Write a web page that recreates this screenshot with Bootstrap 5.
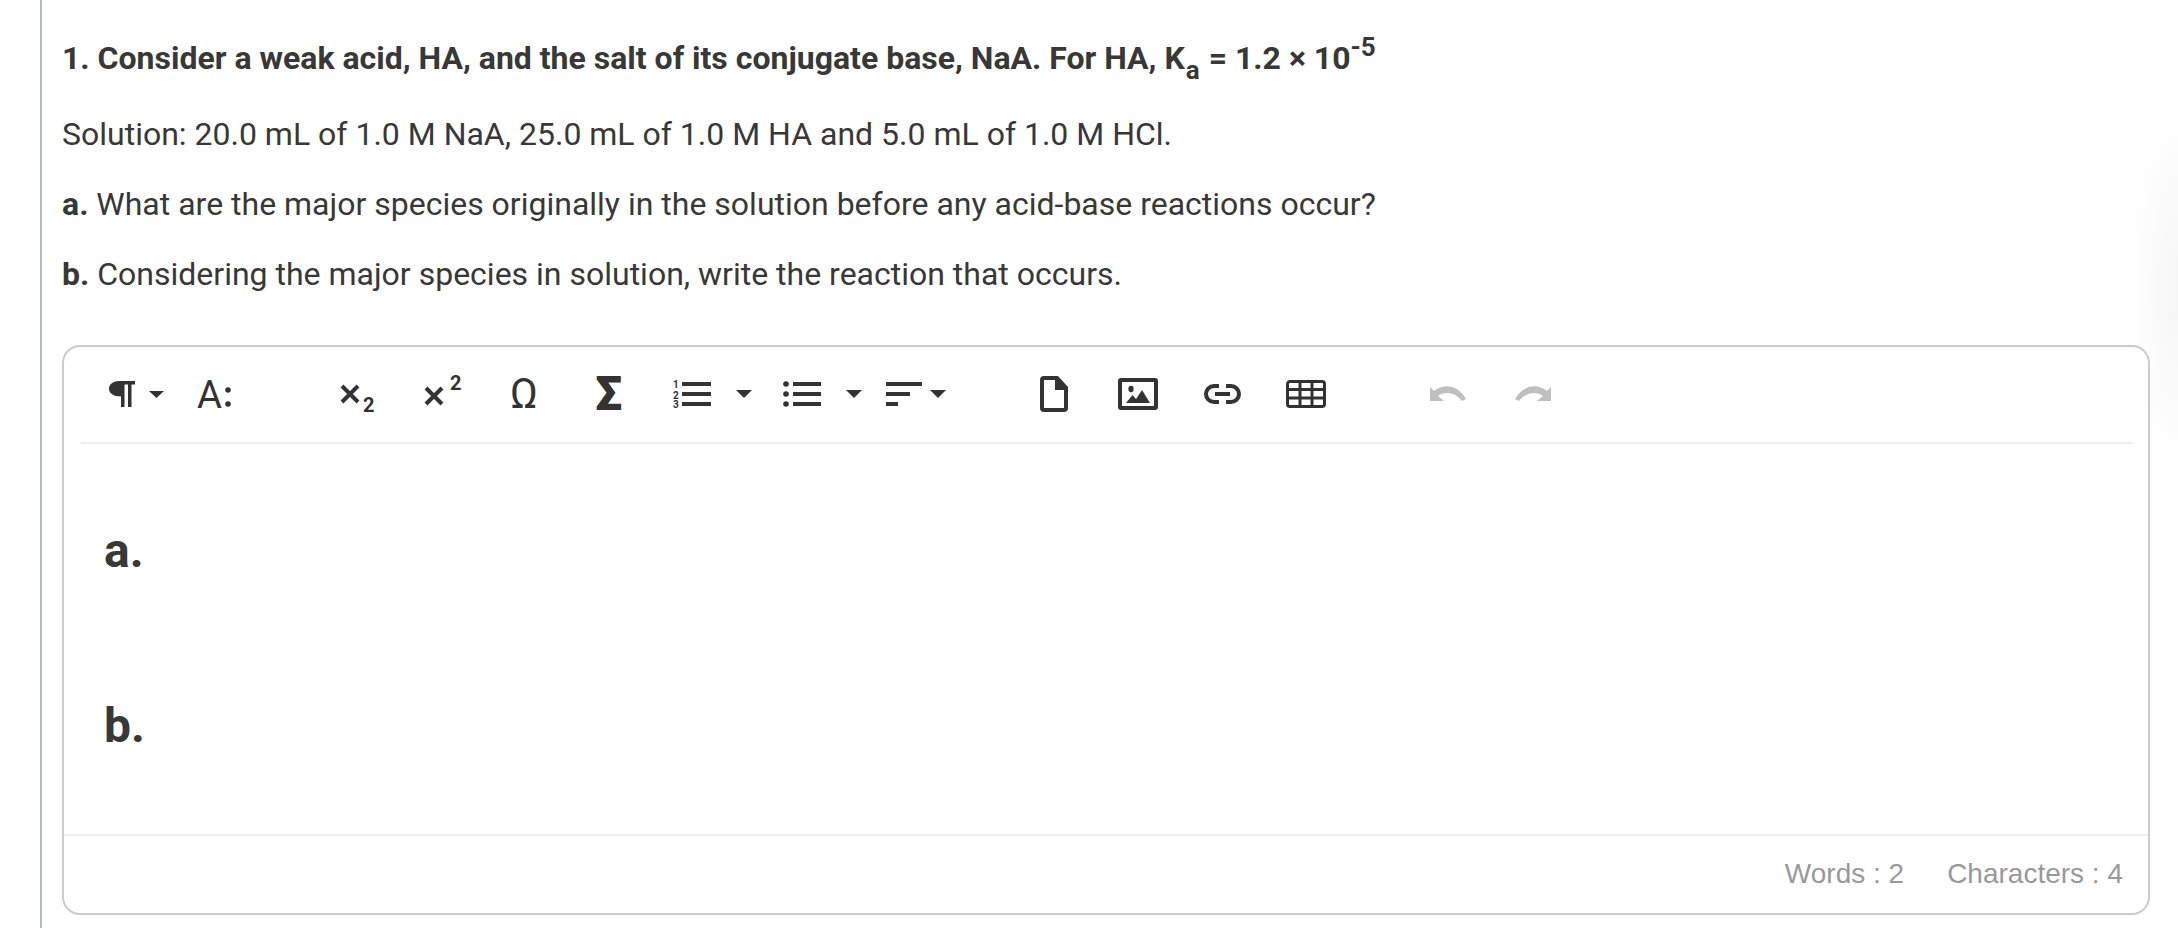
<!DOCTYPE html>
<html lang="en">
<head>
  <meta charset="UTF-8">
  <title>Question</title>
  <link href="https://cdn.jsdelivr.net/npm/bootstrap@5.3.3/dist/css/bootstrap.min.css" rel="stylesheet" crossorigin="anonymous">
  <script src="https://cdn.jsdelivr.net/npm/bootstrap@5.3.3/dist/js/bootstrap.bundle.min.js" crossorigin="anonymous"></script>
  <style>
    html, body { height: 100%; }
    body {
      font-family: Roboto, sans-serif;
      color: #383836;
      overflow: hidden;
      background: radial-gradient(ellipse 50px 190px at 100% 290px, #f6f6f6, #fff);
    }
    .question-wrap {
      height: 928px;
      margin-left: 40px;
      padding: 40px 28px 0 20px;
      border-left: 2px solid #aebdbd;
    }
    .question-text { font-size: 32px; line-height: 36px; margin-bottom: 34px; }
    .question-text.first-line { margin-bottom: 40px; }
    .question-text.last-line { margin-bottom: 53px; }
    .question-text sub { font-size: 26px; bottom: -10px; padding: 0 1px; }
    .question-text sup { font-size: 26px; top: -13px; }
    .editor-box {
      height: 570px;
      border: 2px solid #ccc;
      border-radius: 18px;
      background: #fff;
    }
    .tool-grid {
      display: grid;
      grid-template-columns: 88px 143px 84px 86px 85px 78px 110px 103px 154px 78px 85px 83px 144px 85px auto;
      height: 97px;
      margin: 0 16px 0 17px;
      padding: 29px 0 0 28px;
      border-bottom: 2px solid #eee;
    }
    .tool-grid svg { display: block; fill: #333; }
    .tool-grid .tool-off { fill: #bfbfbf; }
    .tool-grid .tool-tall { margin-top: -14px; }
    .tool-grid text { font-family: Roboto, sans-serif; }
    .editor-body { height: 390px; padding: 0 40px; }
    .editor-body p { font-size: 48px; font-weight: 700; line-height: 56px; margin: 0; }
    .editor-body .ans-a { padding-top: 79px; }
    .editor-body .ans-b { padding-top: 119px; }
    .editor-foot {
      height: 79px;
      padding: 0 25px 2px 0;
      border-top: 2px solid #eee;
      font-family: "Liberation Sans", Arial, sans-serif;
      font-size: 28px;
      color: #999;
    }
    .foot-gap { gap: 43px; }
  </style>
</head>
<body class="m-0">
  <div class="question-wrap">
    <p class="question-text first-line fw-bold">1. Consider a weak acid, HA, and the salt of its conjugate base, NaA. For HA, K<sub>a</sub> = 1.2 × 10<sup>-5</sup></p>
    <p class="question-text">Solution: 20.0 mL of 1.0 M NaA, 25.0 mL of 1.0 M HA and 5.0 mL of 1.0 M HCl.</p>
    <p class="question-text"><b>a.</b> What are the major species originally in the solution before any acid-base reactions occur?</p>
    <p class="question-text last-line"><b>b.</b> Considering the major species in solution, write the reaction that occurs.</p>

    <div class="editor-box">
      <div class="tool-grid">
        <!-- paragraph format -->
        <svg width="56" height="36"><path d="M10 5H26V8.500H22.500V31H19V8.500H15.500V31H12V20.500C4.500 20.500 0 17.500 0 12.800S4.500 5 10 5ZM40 15H55L47.500 22Z"/></svg>
        <!-- font size -->
        <svg class="tool-tall" width="40" height="64" viewBox="0 -14 40 64"><text x="0" y="32" font-size="38" textLength="25" lengthAdjust="spacingAndGlyphs">A</text><circle cx="31" cy="14" r="2.800"/><circle cx="31" cy="28" r="2.800"/></svg>
        <!-- subscript -->
        <svg class="tool-tall" width="40" height="64" viewBox="0 -14 40 64"><path d="M2 10 18 26M18 10 2 26" stroke="#333" stroke-width="4"/><text x="23" y="36" font-size="20" font-weight="700">2</text></svg>
        <!-- superscript -->
        <svg class="tool-tall" width="44" height="64" viewBox="0 -14 44 64"><path d="M2 12 18 28M18 12 2 28" stroke="#333" stroke-width="4"/><text x="26" y="14" font-size="20" font-weight="700">2</text></svg>
        <svg class="tool-tall" width="40" height="64" viewBox="0 -14 40 64"><text x="0" y="32" font-size="42">Ω</text></svg>
        <svg class="tool-tall" width="40" height="64" viewBox="0 -14 40 64"><text x="0" y="34" font-size="48" font-weight="900">Σ</text></svg>
        <!-- ordered list -->
        <svg width="80" height="36"><text x="0" y="12" font-size="10" font-weight="700">1</text><text x="0" y="22.500" font-size="10" font-weight="700">2</text><text x="0" y="32" font-size="10" font-weight="700">3</text><path d="M9 6H38V10H9ZM9 16H38V20H9ZM9 26H38V30H9ZM63 14H79L71 22Z"/></svg>
        <!-- unordered list -->
        <svg width="80" height="36"><circle cx="3" cy="8" r="2.800"/><circle cx="3" cy="18" r="2.800"/><circle cx="3" cy="28" r="2.800"/><path d="M10 6H38V10H10ZM10 16H38V20H10ZM10 26H38V30H10ZM63 14H79L71 22Z"/></svg>
        <!-- align -->
        <svg width="60" height="36"><path d="M0 6H36V10H0ZM0 16H24V20H0ZM0 26H12V30H0ZM44 14H60L52 22Z"/></svg>
        <!-- file -->
        <svg width="28" height="36"><path fill-rule="evenodd" d="M4 0H18L28 11V32A4 4 0 0 1 24 36H4A4 4 0 0 1 0 32V4A4 4 0 0 1 4 0ZM4 4V32H24V14H15V4Z"/></svg>
        <!-- image -->
        <svg width="40" height="36"><path fill-rule="evenodd" d="M3 2H37A3 3 0 0 1 40 5V31A3 3 0 0 1 37 34H3A3 3 0 0 1 0 31V5A3 3 0 0 1 3 2ZM4 6V30H36V6Z"/><ellipse cx="13" cy="13" rx="2.600" ry="3.200"/><path d="M8 27 14.500 19 18 23 24 14 32 27Z"/></svg>
        <!-- link -->
        <svg width="39" height="36"><path d="M16 10H11A8 8 0 0 0 11 26H16M23 10H28A8 8 0 0 1 28 26H23M12 18H27" fill="none" stroke="#333" stroke-width="4"/></svg>
        <!-- table -->
        <svg width="40" height="36"><path d="M4 5.500H36A2.500 2.500 0 0 1 38.500 8V28A2.500 2.500 0 0 1 36 30.500H4A2.500 2.500 0 0 1 1.500 28V8A2.500 2.500 0 0 1 4 5.500ZM1.500 13.500H38.500M1.500 22H38.500M14 5.500V30.500M26 5.500V30.500" fill="none" stroke="#333" stroke-width="3"/></svg>
        <!-- undo / redo -->
        <svg class="tool-off" width="36" height="36"><path d="M0 11V25H14L8 20C14 15 25 16 32 25L36 23C28 9 14 7 4 15Z"/></svg>
        <svg class="tool-off" width="36" height="36"><path transform="matrix(-1 0 0 1 36 0)" d="M0 11V25H14L8 20C14 15 25 16 32 25L36 23C28 9 14 7 4 15Z"/></svg>
      </div>

      <div class="editor-body">
        <p class="ans-a">a.</p>
        <p class="ans-b">b.</p>
      </div>

      <div class="editor-foot d-flex justify-content-end align-items-center foot-gap">
        <span>Words : 2</span>
        <span>Characters : 4</span>
      </div>
    </div>
  </div>
</body>
</html>
